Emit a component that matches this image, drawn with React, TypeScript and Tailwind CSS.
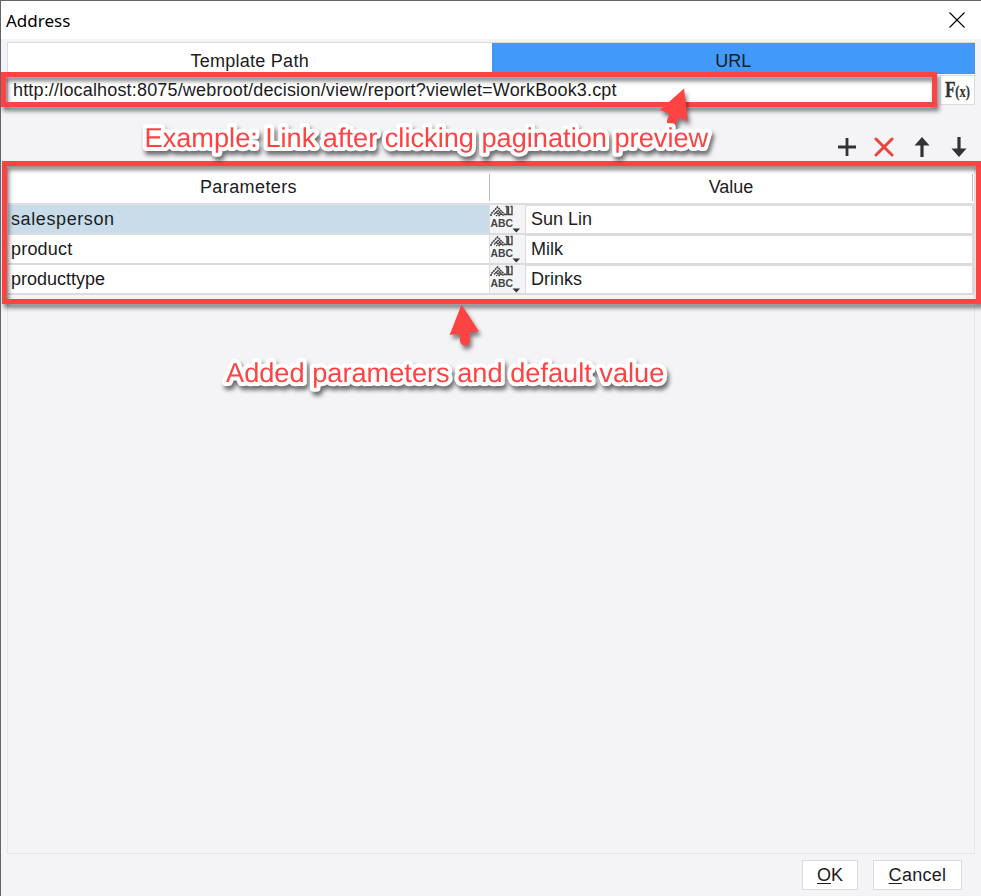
type Parameter = {
  name: string;
  value: string;
  selected?: boolean;
  tracking?: string;
};

const parameters: Parameter[] = [
  { name: "salesperson", value: "Sun Lin", selected: true, tracking: "tracking-[0.6px]" },
  { name: "product", value: "Milk", tracking: "tracking-[0.2px]" },
  { name: "producttype", value: "Drinks" },
];

export default function App() {
  return (
    <div className="relative flex h-[896px] w-[981px] flex-col overflow-hidden border-t border-l border-[#66646a] bg-[#f4f4f7] font-['Liberation_Sans',Arial,sans-serif] text-lg leading-none text-[#1c1c22]">
      <header className="flex h-[38px] shrink-0 items-center justify-between bg-white pr-4 pl-[5px]">
        <h1 className="font-['Noto_Sans','Open_Sans',sans-serif] text-[17px] text-black">Address</h1>
        <CloseIcon />
      </header>

      <div className="flex grow flex-col pt-[3px] pr-[6px] pl-[6px]">
        <div className="grid h-8 shrink-0 grid-cols-2 border-t border-l border-[#dcdce0]">
          <div className="flex items-center justify-center bg-white pt-[5px] tracking-[0.25px]">
            Template Path
          </div>
          <div className="flex items-center justify-center bg-[#4199f9] pt-[5px]">
            URL
          </div>
        </div>

        <div className="flex h-8 shrink-0 items-start justify-between">
          <div className="flex h-[31px] w-[927px] items-center border border-[#dcdce0] bg-white pl-[5px] tracking-[0.17px] whitespace-nowrap">
            http://localhost:8075/webroot/decision/view/report?viewlet=WorkBook3.cpt
          </div>
          <button className="mt-px h-[30px] w-[35px] border border-[#dcdce0] bg-white">
            <FormulaIcon />
          </button>
        </div>

        <div className="mt-[31px] flex h-5 shrink-0 justify-end gap-[17.5px] pr-[6px]">
          <AddIcon />
          <DeleteIcon />
          <UpIcon />
          <DownIcon />
        </div>

        <div className="mt-[9px] flex h-[688px] shrink-0 flex-col border border-[#e6e6e9]">
          <div className="grid h-[38px] shrink-0 grid-cols-[482px_1fr] items-center border-b-2 border-[#dedee0] bg-white">
            <div className="mt-[4px] flex h-[27px] items-center justify-center border-r border-[#bdbcb2] tracking-[0.4px]">
              Parameters
            </div>
            <div className="mt-[4px] mr-px flex h-[27px] items-center justify-center border-r border-[#bdbcb2]">
              Value
            </div>
          </div>
          {parameters.map((parameter) => (
            <ParameterRow key={parameter.name} parameter={parameter} />
          ))}
        </div>

        <footer className="mt-[6px] flex shrink-0 justify-end gap-[15px] pr-[13px]">
          <button className="h-[30px] w-[56px] border border-[#dcdce0] bg-white">
            <span className="underline decoration-1 underline-offset-2">O</span>K
          </button>
          <button className="h-[30px] w-[89px] border border-[#dcdce0] bg-white tracking-[0.3px]">
            <span className="underline decoration-1 underline-offset-2">C</span>ancel
          </button>
        </footer>
      </div>

      <Annotations />
    </div>
  );
}

function ParameterRow({ parameter }: { parameter: Parameter }) {
  return (
    <div className="grid h-[30px] shrink-0 grid-cols-[482px_35px_1fr] border-b-2 border-[#dcdce0]">
      <div
        className={`flex items-center border-r border-[#dcdce0] pl-[3px] ${
          parameter.selected ? "bg-[#c8dce9]" : "bg-white"
        } ${parameter.tracking ?? ""}`}
      >
        {parameter.name}
      </div>
      <TypeIcon />
      <div className="flex items-center border-t border-r-2 border-l border-[#dcdce0] bg-white pb-[2px] pl-[5px]">
        {parameter.value}
      </div>
    </div>
  );
}

function CloseIcon() {
  return (
    <svg className="size-4" viewBox="0 0 16 16" fill="none" stroke="#000" strokeWidth="1.1">
      <path d="M0.5 0.5 15.5 15.5M15.5 0.5 0.5 15.5" />
    </svg>
  );
}

function FormulaIcon() {
  return (
    <svg
      className="h-7 w-[33px] overflow-visible font-['Liberation_Serif',serif]"
      viewBox="0 0 33 28"
      fill="#333"
      stroke="#333"
    >
      <g transform="scale(0.74 1)">
        <text x="5.5" y="21.5" fontSize="23.5" fontWeight="700" strokeWidth="0.3">
          F
          <tspan fontSize="17" fontWeight="700" strokeWidth="0.2" dx="-0.5" dy="-0.5">
            (x)
          </tspan>
        </text>
      </g>
    </svg>
  );
}

function AddIcon() {
  return (
    <svg className="size-5" viewBox="0 0 20 20" fill="none" stroke="#333" strokeWidth="2.8">
      <path d="M10 1v18M1 10h18" />
    </svg>
  );
}

function DeleteIcon() {
  return (
    <svg className="size-5" viewBox="0 0 20 20" fill="none" stroke="#e9453f" strokeWidth="3" strokeLinecap="round">
      <path d="M2 2 18 18M18 2 2 18" />
    </svg>
  );
}

function UpIcon() {
  return (
    <svg className="size-5" viewBox="0 0 20 20" fill="#333">
      <path d="M10 0 17.5 8.5H11.6V20H8.4V8.5H2.5Z" />
    </svg>
  );
}

function DownIcon() {
  return (
    <svg className="size-5" viewBox="0 0 20 20" fill="#333">
      <path d="M10 20 17.5 11.5H11.6V0H8.4V11.5H2.5Z" />
    </svg>
  );
}

// Text type selector with a small dropdown mark in the corner
function TypeIcon() {
  return (
    <svg
      className="h-7 w-[35px] font-['Liberation_Sans',sans-serif]"
      viewBox="0 0 35 28"
      fill="none"
      stroke="#444"
    >
      <path d="M1 11V9L7.5 2 14.5 9.5" strokeWidth="1.6" strokeDasharray="2 0.6" />
      <path d="M4 9.5 8 5.5M6 11 10 7M8.5 11 11.5 8M6 7 10 11M8 5 13.5 11" strokeWidth="1.1" />
      <path d="M13.5 9.5h3.5V1M15.5 1.5h2M18.5 1V9.5h3.5V1M20.5 1.5h2" strokeWidth="1.4" />
      <text x="0.5" y="22" fontSize="11.5" fontWeight="700" fill="#444" stroke="none" textLength="22.5" lengthAdjust="spacingAndGlyphs">
        ABC
      </text>
      <path d="M22.5 23.5h7.5l-3.700 4z" fill="#333" stroke="none" />
    </svg>
  );
}

function Annotations() {
  return (
    <svg
      className="pointer-events-none absolute -top-px -left-px h-[896px] w-[981px] font-['Liberation_Sans',Arial,sans-serif]"
      viewBox="0 0 981 896"
    >
      <g className="drop-shadow-[2px_4px_2px_rgba(0,0,0,0.5)]" fill="none" stroke="#ff4343" strokeWidth="5">
        <rect x="3.5" y="74.5" width="931" height="30" />
        <rect x="4.5" y="163.5" width="974" height="138" />
      </g>
      <g
        className="drop-shadow-[2px_4px_2px_rgba(0,0,0,0.5)]"
        fill="#ff4343"
        stroke="#ff4343"
        strokeLinecap="round"
      >
        <path d="M684 88.5 688 121 660 110Z" strokeWidth="0" />
        <path d="M676 111 672 121" strokeWidth="10" />
        <path d="M461.5 304.5 479 331.5 449.7 335Z" strokeWidth="0" />
        <path d="M464 328 465 340.5" strokeWidth="10" />
      </g>
      <g
        className="drop-shadow-[2px_4px_2px_rgba(0,0,0,0.55)] [paint-order:stroke] [text-rendering:geometricPrecision]"
        fill="#ff4343"
        stroke="#fff"
        strokeWidth="8"
        strokeLinejoin="round"
        fontSize="27.2"
      >
        <text x="144.5" y="146.5">Example: Link after clicking pagination preview</text>
        <text x="226" y="382">Added parameters and default value</text>
      </g>
    </svg>
  );
}
